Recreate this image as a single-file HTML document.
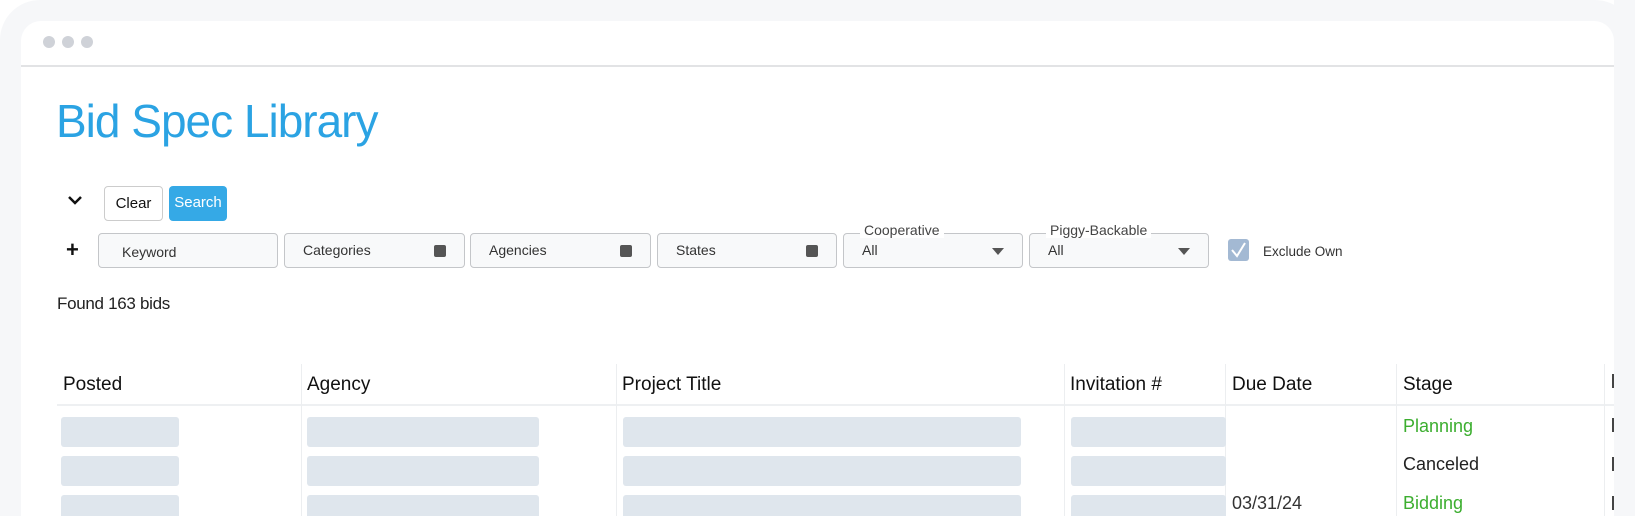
<!DOCTYPE html>
<html style="width:1635px;height:516px;overflow:hidden"><head><meta charset="utf-8"><style>
*{margin:0;padding:0;box-sizing:border-box}
body{width:1635px;height:516px;overflow:hidden;background:#fff;font-family:"Liberation Sans",Arial,sans-serif;position:relative}
.outer{position:absolute;left:0;top:0;width:1635px;height:516px;background:#f6f7f9;border-radius:40px 40px 0 0}
.win{position:absolute;left:21px;top:21px;width:1593px;height:495px;background:#fff;border-radius:20px 20px 0 0;overflow:hidden}
.dot{position:absolute;top:36px;width:12px;height:12px;border-radius:50%;background:#cfd2d8}
.hline{position:absolute;left:21px;top:65px;width:1593px;height:2px;background:#e2e3e5}
.a{position:absolute}
.title{left:56px;top:94px;font-size:46px;color:#2ba3e3;font-weight:300;letter-spacing:-1px}
.btn{top:186px;height:35px;border-radius:4px;font-size:15px;line-height:33px;text-align:center}
.box{top:233px;height:35px;border:1.5px solid #c4c6c9;border-radius:4px;background:#f8f9fa;font-size:14px;color:#333;padding-left:18px;line-height:32px}
.sq{position:absolute;right:18px;top:11px;width:12px;height:12px;background:#555;border-radius:2px}
.tri{position:absolute;right:18px;top:14px;width:0;height:0;border-left:6px solid transparent;border-right:6px solid transparent;border-top:7px solid #555}
.lbl{position:absolute;top:-12px;left:16px;background:#fff;padding:0 4px;font-size:14px;color:#444;line-height:16px}
.th{top:374px;font-size:19px;color:#111}
.vl{top:364px;width:1px;height:160px;background:#eceef0}
.bar{height:30px;background:#dfe6ed;border-radius:3px}
.td{font-size:18px}
</style></head><body>
<div class="outer"></div>
<div class="win"></div>
<div class="dot" style="left:43px"></div><div class="dot" style="left:62px"></div><div class="dot" style="left:81px"></div>
<div class="hline"></div>
<div class="a title">Bid Spec Library</div>
<svg class="a" style="left:67px;top:195px" width="16" height="12"><path d="M2 2 L8 8 L14 2" stroke="#111" stroke-width="2.5" fill="none"/></svg>
<div class="a btn" style="left:104px;width:59px;border:1px solid #ccc;color:#111">Clear</div>
<div class="a btn" style="left:169px;width:58px;background:#35a9e6;color:#fff">Search</div>
<div class="a" style="left:66px;top:237px;font-size:22px;font-weight:bold;color:#111">+</div>
<div class="a box" style="left:98px;width:180px;padding-left:23px;line-height:36px">Keyword</div>
<div class="a box" style="left:284px;width:181px">Categories<div class="sq"></div></div>
<div class="a box" style="left:470px;width:181px">Agencies<div class="sq"></div></div>
<div class="a box" style="left:657px;width:180px">States<div class="sq"></div></div>
<div class="a box" style="left:843px;width:180px;padding-left:18px">All<div class="tri"></div><div class="lbl">Cooperative</div></div>
<div class="a box" style="left:1029px;width:180px;padding-left:18px">All<div class="tri"></div><div class="lbl">Piggy-Backable</div></div>
<div class="a" style="left:1228px;top:239px;width:21px;height:22px;background:#a3b9d3;border-radius:3px"><svg width="21" height="22"><path d="M4 11 L9 17 L17 4" stroke="#fff" stroke-width="2" fill="none"/></svg></div>
<div class="a" style="left:1263px;top:244px;font-size:13.5px;color:#333">Exclude Own</div>
<div class="a" style="left:57px;top:294px;font-size:17px;color:#222;letter-spacing:-0.3px">Found 163 bids</div>
<div class="a" style="left:57px;top:404px;width:1557px;height:2px;background:#eef0f2"></div>
<div class="a vl" style="left:301px"></div><div class="a vl" style="left:616px"></div><div class="a vl" style="left:1064px"></div><div class="a vl" style="left:1225px"></div><div class="a vl" style="left:1396px"></div><div class="a vl" style="left:1604px"></div>
<div class="a th" style="left:63px">Posted</div>
<div class="a th" style="left:307px">Agency</div>
<div class="a th" style="left:622px">Project Title</div>
<div class="a th" style="left:1070px">Invitation #</div>
<div class="a th" style="left:1232px">Due Date</div>
<div class="a th" style="left:1403px">Stage</div>
<div class="a bar" style="left:61px;top:417px;width:118px"></div>
<div class="a bar" style="left:61px;top:456px;width:118px"></div>
<div class="a bar" style="left:61px;top:495px;width:118px"></div>
<div class="a bar" style="left:307px;top:417px;width:232px"></div>
<div class="a bar" style="left:307px;top:456px;width:232px"></div>
<div class="a bar" style="left:307px;top:495px;width:232px"></div>
<div class="a bar" style="left:623px;top:417px;width:398px"></div>
<div class="a bar" style="left:623px;top:456px;width:398px"></div>
<div class="a bar" style="left:623px;top:495px;width:398px"></div>
<div class="a bar" style="left:1071px;top:417px;width:155px"></div>
<div class="a bar" style="left:1071px;top:456px;width:155px"></div>
<div class="a bar" style="left:1071px;top:495px;width:155px"></div>
<div class="a td" style="left:1403px;top:416px;color:#3cae2f">Planning</div>
<div class="a td" style="left:1403px;top:454px;color:#222">Canceled</div>
<div class="a td" style="left:1403px;top:493px;color:#3cae2f">Bidding</div>
<div class="a td" style="left:1232px;top:493px;color:#333">03/31/24</div>
<div class="a" style="left:1612px;top:374px;width:2px;height:14px;background:#444"></div>
<div class="a" style="left:1612px;top:418px;width:2px;height:14px;background:#444"></div>
<div class="a" style="left:1612px;top:457px;width:2px;height:14px;background:#444"></div>
<div class="a" style="left:1612px;top:496px;width:2px;height:14px;background:#444"></div>
<div class="a" style="left:1614px;top:0;width:21px;height:516px;background:#f6f7f9"></div>
</body></html>
